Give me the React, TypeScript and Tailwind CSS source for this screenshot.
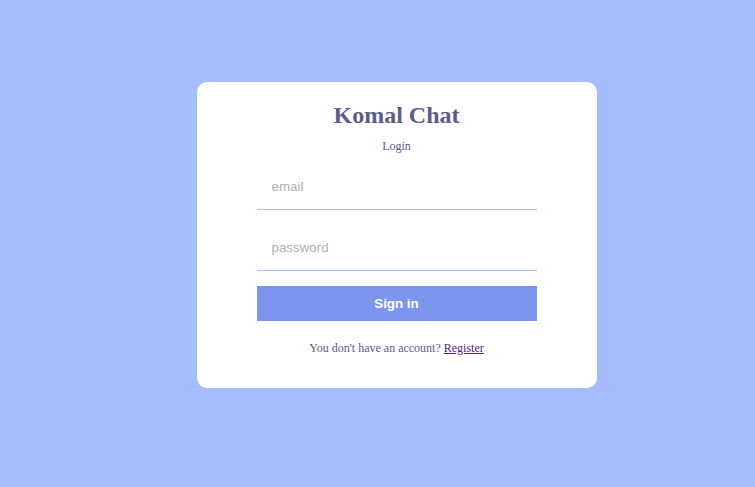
import React from "react";

export default function App() {
  return (
    <div
      className="w-full h-[487px] bg-[#a7bcff] flex items-center justify-center pl-[38px] pb-[17px]"
      style={{ fontFamily: '"Liberation Serif", "Times New Roman", serif' }}
    >
      <div className="bg-white rounded-[10px] px-[60px] pt-[19px] pb-[20px] flex flex-col items-center gap-[10px] w-[400px]">
        <span className="text-[#5d5b8d] font-bold text-[24px] leading-[28px]">Komal Chat</span>
        <span className="text-[#5d5b8d] text-[12px] leading-[14px]">Login</span>
        <form
          className="flex flex-col gap-[15px] mt-[1px]"
          onSubmit={(e) => e.preventDefault()}
          style={{ fontFamily: '"Liberation Sans", Arial, sans-serif' }}
        >
          <input
            type="email"
            placeholder="email"
            className="w-[280px] p-[15px] text-[13.33px] leading-[15px] border-0 border-b border-[#a7bcff] outline-none placeholder:text-[#afafaf]"
          />
          <input
            type="password"
            placeholder="password"
            className="w-[280px] p-[15px] text-[13.33px] leading-[15px] border-0 border-b border-[#a7bcff] outline-none placeholder:text-[#afafaf]"
          />
          <button className="w-[280px] bg-[#7b96ec] text-white font-bold p-[10px] text-[13.33px] leading-[15px]">
            Sign in
          </button>
        </form>
        <p className="text-[#5d5b8d] text-[12px] leading-[14px] mt-[10px] mb-[13px]">
          You don't have an account?{" "}
          <a href="#" className="underline text-[#551a8b]">Register</a>
        </p>
      </div>
    </div>
  );
}
